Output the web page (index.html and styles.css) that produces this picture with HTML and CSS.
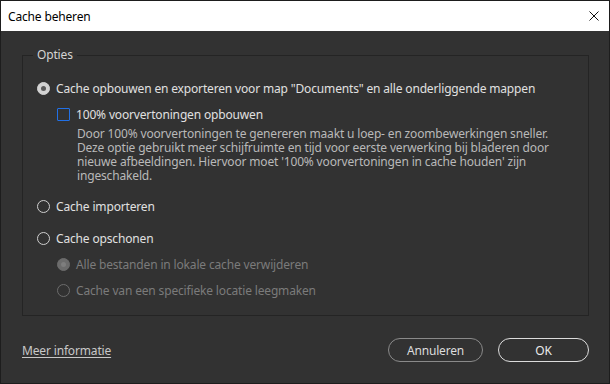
FILE: index.html
```html
<!DOCTYPE html>
<html lang="nl">

<head>
    <meta charset="UTF-8">
    <meta name="viewport" content="width=device-width, initial-scale=1.0">
    <title>Cache beheren</title>
    <link rel="stylesheet" href="styles.css">
</head>

<body>
    <div class="window">
        <header class="titlebar">
            <span class="title">Cache beheren</span>
            <svg class="close" width="10" height="10" viewBox="0 0 10 10">
                <path d="M0.5 0.5 L9.5 9.5 M9.5 0.5 L0.5 9.5" stroke="#111" stroke-width="1" fill="none" />
            </svg>
        </header>

        <main class="content">
            <fieldset class="group">
                <legend>Opties</legend>

                <div class="row first">
                    <span class="radio checked"></span>
                    <span>Cache opbouwen en exporteren voor map "Documents" en alle onderliggende mappen</span>
                </div>

                <div class="row sub">
                    <span class="checkbox"></span>
                    <span>100% voorvertoningen opbouwen</span>
                </div>
                <p class="desc">Door 100% voorvertoningen te genereren maakt u loep- en zoombewerkingen sneller.<br>
                    Deze optie gebruikt meer schijfruimte en tijd voor eerste verwerking bij bladeren door<br>
                    nieuwe afbeeldingen. Hiervoor moet '100% voorvertoningen in cache houden' zijn<br>
                    ingeschakeld.</p>

                <div class="row gap">
                    <span class="radio"></span>
                    <span>Cache importeren</span>
                </div>

                <div class="row gap">
                    <span class="radio"></span>
                    <span>Cache opschonen</span>
                </div>

                <div class="row sub disabled">
                    <span class="radio checked"></span>
                    <span>Alle bestanden in lokale cache verwijderen</span>
                </div>
                <div class="row sub disabled">
                    <span class="radio"></span>
                    <span>Cache van een specifieke locatie leegmaken</span>
                </div>
            </fieldset>

            <footer class="actions">
                <a class="more" href="#">Meer informatie</a>
                <div class="buttons">
                    <button class="btn">Annuleren</button>
                    <button class="btn primary">OK</button>
                </div>
            </footer>
        </main>
    </div>
</body>

</html>
```

FILE: styles.css
```css
* {
    box-sizing: border-box;
}

html,
body {
    margin: 0;
    padding: 0;
    background: #323232;
}

body {
    font-family: "Noto Sans", "Open Sans", sans-serif;
    font-size: 12px;
    letter-spacing: -0.16px;
}

.window {
    width: 610px;
    height: 384px;
    border: 1px solid #1d1d1d;
    display: flex;
    flex-direction: column;
    background: #323232;
}

.titlebar {
    height: 30px;
    background: #fff;
    display: flex;
    align-items: center;
    justify-content: space-between;
    padding: 0 10px 0 7px;
    flex-shrink: 0;
}

.title {
    color: #000;
    font-size: 12px;
}

.close {
    display: block;
}

.content {
    flex: 1;
    display: flex;
    flex-direction: column;
    padding: 17px 20px 0 21px;
}

.group {
    margin: 0;
    padding: 0 0 14px 0;
    height: 268px;
    border: 1px solid #242424;
    color: #dedede;
}

.group legend {
    margin-left: 10px;
    padding: 0 4px;
    line-height: 14px;
    color: #d4d4d4;
}

.row {
    display: flex;
    align-items: center;
    gap: 6px;
    height: 17px;
    line-height: 17px;
    white-space: nowrap;
    padding-left: 14px;
    color: #e0e0e0;
}

.row.first {
    margin-top: 18px;
}

.row.sub {
    padding-left: 34px;
    margin-top: 9px;
}

.row.gap {
    margin-top: 15px;
}

.row.disabled {
    color: #7b7b7b;
}

.radio {
    width: 13px;
    height: 13px;
    border-radius: 50%;
    border: 1.5px solid #cfcfcf;
    flex-shrink: 0;
    position: relative;
}

.radio.checked {
    background: #d2d2d2;
    border-color: #d2d2d2;
}

.radio.checked::after {
    content: "";
    position: absolute;
    left: 2.5px;
    top: 2.5px;
    width: 5px;
    height: 5px;
    border-radius: 50%;
    background: #5a5a5a;
}

.disabled .radio {
    border-color: #6c6c6c;
}

.disabled .radio.checked {
    background: #6c6c6c;
}

.disabled .radio.checked::after {
    background: #7e7e7e;
}

.checkbox {
    width: 13px;
    height: 13px;
    border: 1px solid #2170e6;
    border-radius: 1px;
    flex-shrink: 0;
}

.desc {
    margin: 4px 0 0 54px;
    color: #b9b9b9;
    line-height: 14px;
    white-space: nowrap;
}

.actions {
    display: flex;
    align-items: center;
    justify-content: space-between;
    margin-top: 22px;
}

.more {
    color: #c8c8c8;
    text-decoration: underline;
    text-underline-offset: 2px;
}

.buttons {
    display: flex;
    gap: 15px;
}

.btn {
    font-family: "Noto Sans", "Open Sans", sans-serif;
    font-size: 12px;
    letter-spacing: -0.16px;
    height: 24px;
    width: 95px;
    border-radius: 12px;
    background: transparent;
    border: 1px solid #8a8a8a;
    color: #dcdcdc;
    padding: 0;
}

.btn.primary {
    width: 91px;
    border-color: #dcdcdc;
    color: #eaeaea;
}
```
